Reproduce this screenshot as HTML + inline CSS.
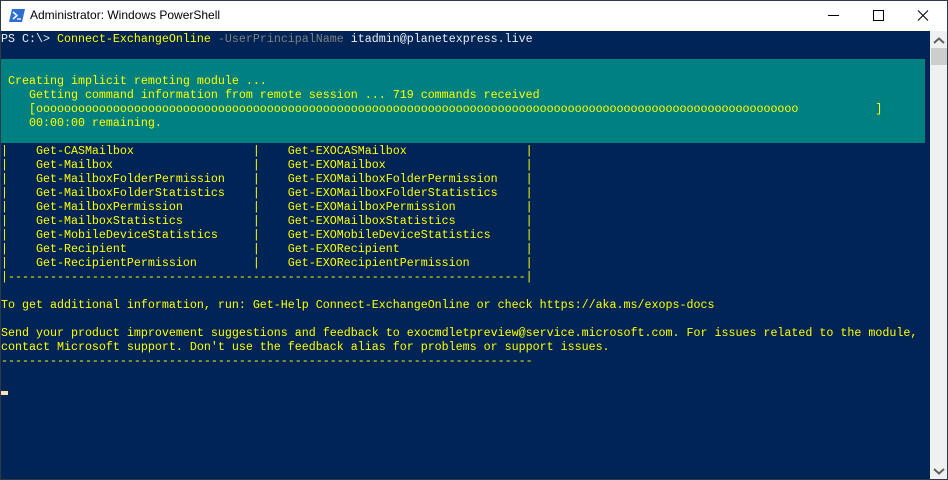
<!DOCTYPE html>
<html><head><meta charset="utf-8"><style>
body{margin:0;width:948px;height:480px;overflow:hidden;background:#012456;position:relative;font-family:"Liberation Mono",monospace}
#title{position:absolute;left:0;top:0;width:948px;height:31px;background:#fff}
#title .t{position:absolute;left:30px;top:8px;font:12px "Liberation Sans",sans-serif;color:#000}
.l{position:absolute;left:1px;height:14px;line-height:16px;font-size:11.67px;white-space:pre;color:#ffff00}
#teal{position:absolute;left:0;top:59px;width:925px;height:84px;background:#008080}
#sb{position:absolute;left:930px;top:31px;width:18px;height:449px;background:#f0f0f0}
#thumb{position:absolute;left:931px;top:48px;width:16px;height:17px;background:#cdcdcd}
#border{position:absolute;left:0;top:0;width:946px;height:478px;border:1px solid #2b3a4a;pointer-events:none}
</style></head><body>
<div id="title">
<svg style="position:absolute;left:9px;top:9px" width="16" height="13" viewBox="0 0 16 13"><polygon points="3,0 16,0 13,13 0,13" fill="#2c6fd1"/><polyline points="4,3 8,6.5 4,10" fill="none" stroke="#fff" stroke-width="1.5"/><line x1="8" y1="10" x2="12" y2="10" stroke="#fff" stroke-width="1.3"/></svg>
<div class="t">Administrator: Windows PowerShell</div>
<svg style="position:absolute;left:826px;top:10px" width="110" height="12"><line x1="2" y1="5.5" x2="13" y2="5.5" stroke="#000"/><rect x="47.5" y="0.5" width="10" height="10" fill="none" stroke="#000"/><path d="M92 0.5L102 10.5M102 0.5L92 10.5" stroke="#000"/></svg>
</div>
<div id="teal"></div>
<div id="sb"></div><div id="thumb"></div>
<svg style="position:absolute;left:933px;top:37px" width="12" height="8"><polyline points="1,6 6,1.5 11,6" fill="none" stroke="#606060" stroke-width="2"/></svg>
<svg style="position:absolute;left:933px;top:467px" width="12" height="8"><polyline points="1,2 6,6.5 11,2" fill="none" stroke="#606060" stroke-width="2"/></svg>
<div class="l" style="top:31px"><span style="color:#eeedf0">PS C:\&gt; </span>Connect-ExchangeOnline <span style="color:#808080">-UserPrincipalName</span> <span style="color:#eeedf0">itadmin@planetexpress.live</span></div>
<div class="l" style="top:73px"> Creating implicit remoting module ...</div>
<div class="l" style="top:87px">    Getting command information from remote session ... 719 commands received</div>
<div class="l" style="top:101px">    [ooooooooooooooooooooooooooooooooooooooooooooooooooooooooooooooooooooooooooooooooooooooooooooooooooooooooooooo           ]</div>
<div class="l" style="top:115px">    00:00:00 remaining.</div>
<div class="l" style="top:143px">|    Get-CASMailbox                 |    Get-EXOCASMailbox                 |</div>
<div class="l" style="top:157px">|    Get-Mailbox                    |    Get-EXOMailbox                    |</div>
<div class="l" style="top:171px">|    Get-MailboxFolderPermission    |    Get-EXOMailboxFolderPermission    |</div>
<div class="l" style="top:185px">|    Get-MailboxFolderStatistics    |    Get-EXOMailboxFolderStatistics    |</div>
<div class="l" style="top:199px">|    Get-MailboxPermission          |    Get-EXOMailboxPermission          |</div>
<div class="l" style="top:213px">|    Get-MailboxStatistics          |    Get-EXOMailboxStatistics          |</div>
<div class="l" style="top:227px">|    Get-MobileDeviceStatistics     |    Get-EXOMobileDeviceStatistics     |</div>
<div class="l" style="top:241px">|    Get-Recipient                  |    Get-EXORecipient                  |</div>
<div class="l" style="top:255px">|    Get-RecipientPermission        |    Get-EXORecipientPermission        |</div>
<div class="l" style="top:269px">|--------------------------------------------------------------------------|</div>
<div class="l" style="top:297px">To get additional information, run: Get-Help Connect-ExchangeOnline or check https://aka.ms/exops-docs</div>
<div class="l" style="top:325px">Send your product improvement suggestions and feedback to exocmdletpreview@service.microsoft.com. For issues related to the module,</div>
<div class="l" style="top:339px">contact Microsoft support. Don't use the feedback alias for problems or support issues.</div>
<div class="l" style="top:353px">----------------------------------------------------------------------------</div>
<div style="position:absolute;left:1px;top:391px;width:7px;height:4px;background:#fce4b8"></div>
<div id="border"></div>
</body></html>
